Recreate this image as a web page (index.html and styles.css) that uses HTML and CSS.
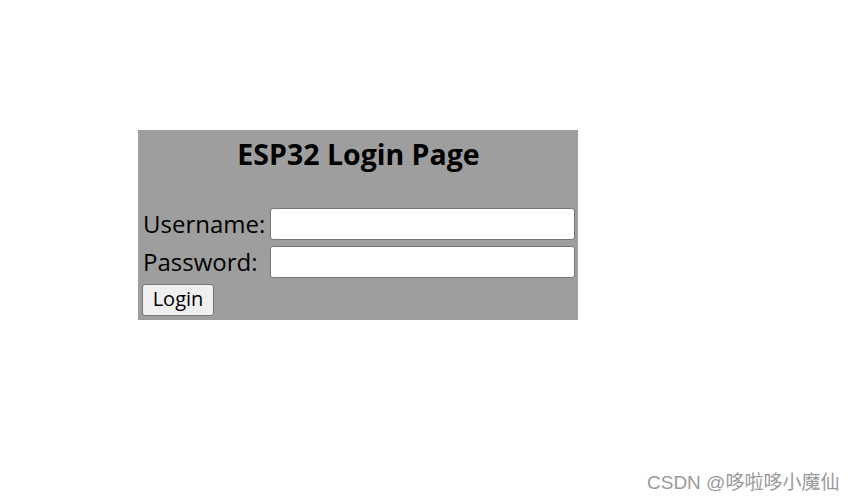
FILE: index.html
```html
<!DOCTYPE html>
<html>
<head>
<meta charset="utf-8">
<link rel="stylesheet" href="styles.css">
</head>
<body>
<div class="page">
  <div class="card">
    <h2 class="title">ESP32 Login Page</h2>
    <form class="form">
      <div class="grid">
        <label class="label">Username:</label>
        <input class="field" type="text">
        <label class="label">Password:</label>
        <input class="field" type="password">
      </div>
      <button class="btn" type="button">Login</button>
    </form>
  </div>
</div>
<div class="mark">CSDN @哆啦哆小魔仙</div>
</body>
</html>
```
FILE: styles.css
```css
html, body {
  margin: 0;
  padding: 0;
  background: #fff;
  width: 853px;
  height: 501px;
  overflow: hidden;
  position: relative;
}
.page {
  padding: 130px 0 0 138px;
}
.card {
  width: 440px;
  height: 190px;
  box-sizing: border-box;
  background: #9e9e9e;
  padding: 0 3px 0 4px;
  font-family: "Open Sans", "Noto Sans", sans-serif;
  color: #000;
}
.title {
  margin: 0;
  padding-top: 6px;
  height: 70px;
  box-sizing: border-box;
  text-align: center;
  font-size: 28.5px;
  font-weight: 700;
  line-height: 36px;
}
.form {
  margin: 0;
}
.grid {
  display: grid;
  grid-template-columns: 128px 1fr;
  row-gap: 6px;
  align-items: center;
  margin-top: 8px;
}
.label {
  font-size: 24px;
  line-height: 32px;
  padding-left: 1px;
}
.field {
  height: 32px;
  box-sizing: border-box;
  border: 1px solid #767676;
  border-radius: 3px;
  background: #fff;
  margin: 0;
}
.btn {
  margin-top: 6px;
  width: 72px;
  height: 32px;
  font-family: "Open Sans", "Noto Sans", sans-serif;
  font-size: 20px;
  line-height: 28px;
  background: #efefef;
  border: 1px solid #767676;
  border-radius: 3px;
  padding: 0 0 2px;
  color: #000;
}
.mark {
  position: absolute;
  left: 647px;
  top: 469px;
  font-family: "Liberation Sans", "Noto Sans CJK SC", sans-serif;
  font-size: 19px;
  line-height: 28px;
  color: #999;
}
```
